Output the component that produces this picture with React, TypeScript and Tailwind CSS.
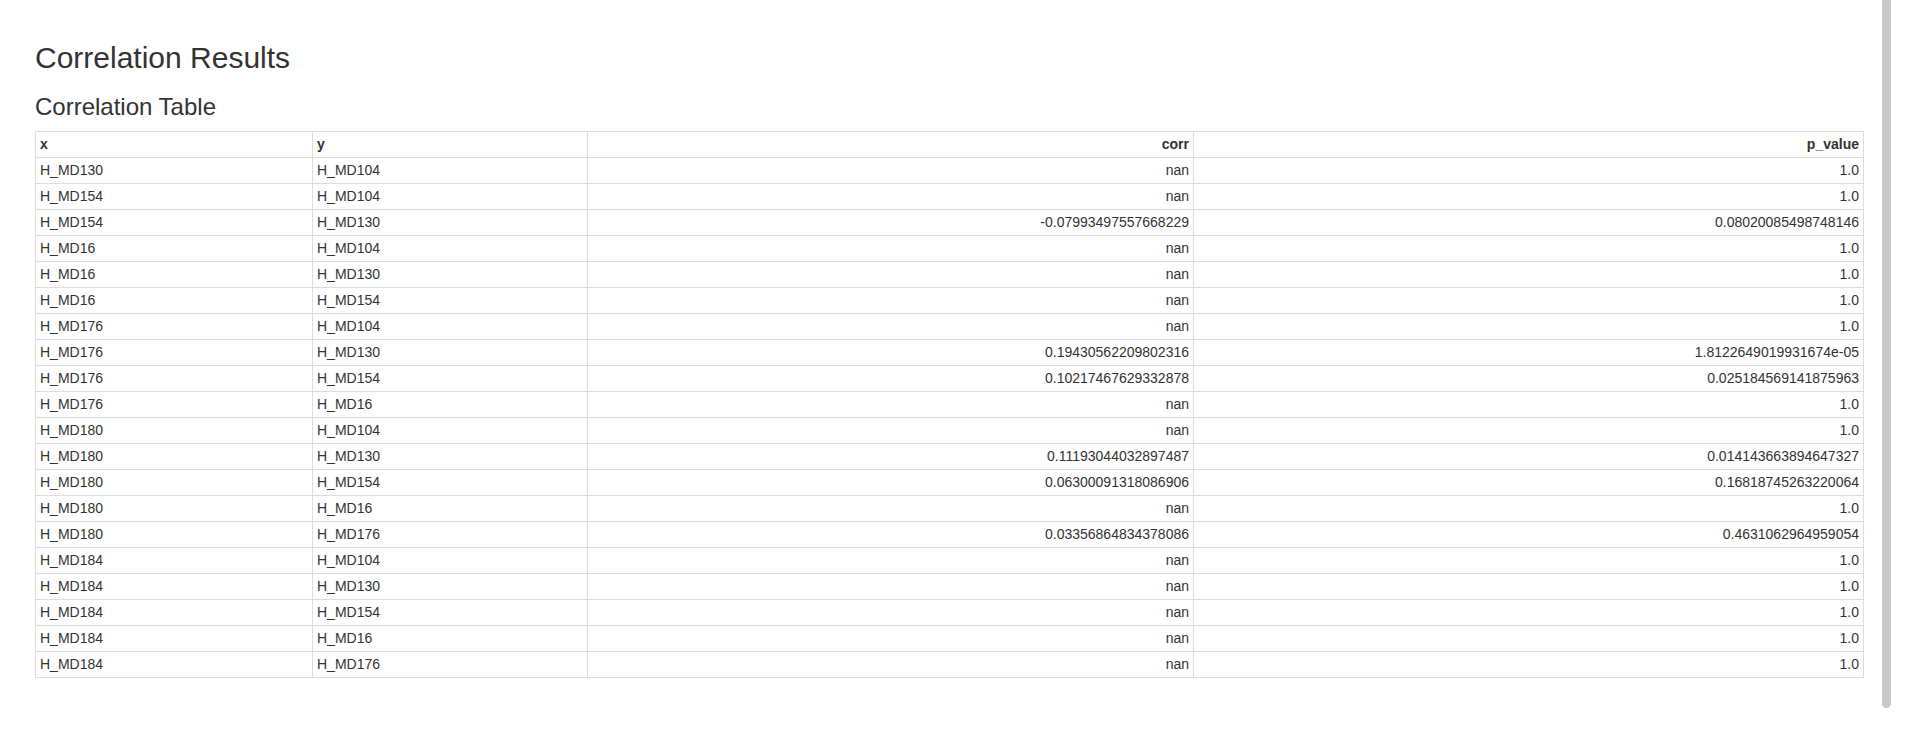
import React from 'react';

interface Row {
  x: string;
  y: string;
  corr: string;
  p: string;
}

const rows: Row[] = [
  { x: 'H_MD130', y: 'H_MD104', corr: 'nan', p: '1.0' },
  { x: 'H_MD154', y: 'H_MD104', corr: 'nan', p: '1.0' },
  { x: 'H_MD154', y: 'H_MD130', corr: '-0.07993497557668229', p: '0.08020085498748146' },
  { x: 'H_MD16', y: 'H_MD104', corr: 'nan', p: '1.0' },
  { x: 'H_MD16', y: 'H_MD130', corr: 'nan', p: '1.0' },
  { x: 'H_MD16', y: 'H_MD154', corr: 'nan', p: '1.0' },
  { x: 'H_MD176', y: 'H_MD104', corr: 'nan', p: '1.0' },
  { x: 'H_MD176', y: 'H_MD130', corr: '0.19430562209802316', p: '1.8122649019931674e-05' },
  { x: 'H_MD176', y: 'H_MD154', corr: '0.10217467629332878', p: '0.025184569141875963' },
  { x: 'H_MD176', y: 'H_MD16', corr: 'nan', p: '1.0' },
  { x: 'H_MD180', y: 'H_MD104', corr: 'nan', p: '1.0' },
  { x: 'H_MD180', y: 'H_MD130', corr: '0.11193044032897487', p: '0.014143663894647327' },
  { x: 'H_MD180', y: 'H_MD154', corr: '0.06300091318086906', p: '0.16818745263220064' },
  { x: 'H_MD180', y: 'H_MD16', corr: 'nan', p: '1.0' },
  { x: 'H_MD180', y: 'H_MD176', corr: '0.03356864834378086', p: '0.4631062964959054' },
  { x: 'H_MD184', y: 'H_MD104', corr: 'nan', p: '1.0' },
  { x: 'H_MD184', y: 'H_MD130', corr: 'nan', p: '1.0' },
  { x: 'H_MD184', y: 'H_MD154', corr: 'nan', p: '1.0' },
  { x: 'H_MD184', y: 'H_MD16', corr: 'nan', p: '1.0' },
  { x: 'H_MD184', y: 'H_MD176', corr: 'nan', p: '1.0' },
];

const cell = 'border border-[#dddddd] px-[4px] pt-[2px] pb-[3px] leading-[20px] h-[26px]';

const App: React.FC = () => {
  return (
    <div className="h-screen overflow-hidden bg-white font-['Liberation_Sans',Arial,sans-serif] text-[14px] text-[#333333]">
      <div className="pl-[35px] pr-[45px] pt-[41px]">
        <h2 className="text-[30px] leading-[33px] font-normal">Correlation Results</h2>
        <h3 className="mt-[20px] text-[24px] leading-[26px] font-normal">Correlation Table</h3>
        <table className="mt-[11px] w-full table-fixed border-collapse">
          <colgroup>
            <col className="w-[277px]" />
            <col className="w-[275px]" />
            <col className="w-[606px]" />
            <col />
          </colgroup>
          <thead>
            <tr>
              <th className={`${cell} text-left font-bold`}>x</th>
              <th className={`${cell} text-left font-bold`}>y</th>
              <th className={`${cell} text-right font-bold`}>corr</th>
              <th className={`${cell} text-right font-bold`}>p_value</th>
            </tr>
          </thead>
          <tbody>
            {rows.map((r, i) => (
              <tr key={i}>
                <td className={`${cell} text-left`}>{r.x}</td>
                <td className={`${cell} text-left`}>{r.y}</td>
                <td className={`${cell} text-right`}>{r.corr}</td>
                <td className={`${cell} text-right`}>{r.p}</td>
              </tr>
            ))}
          </tbody>
        </table>
      </div>
      {/* scrollbar thumb */}
      <div className="fixed right-[18px] top-[-6px] h-[714px] w-[9px] rounded-full bg-[#c9c9c9]" />
    </div>
  );
};

export default App;
